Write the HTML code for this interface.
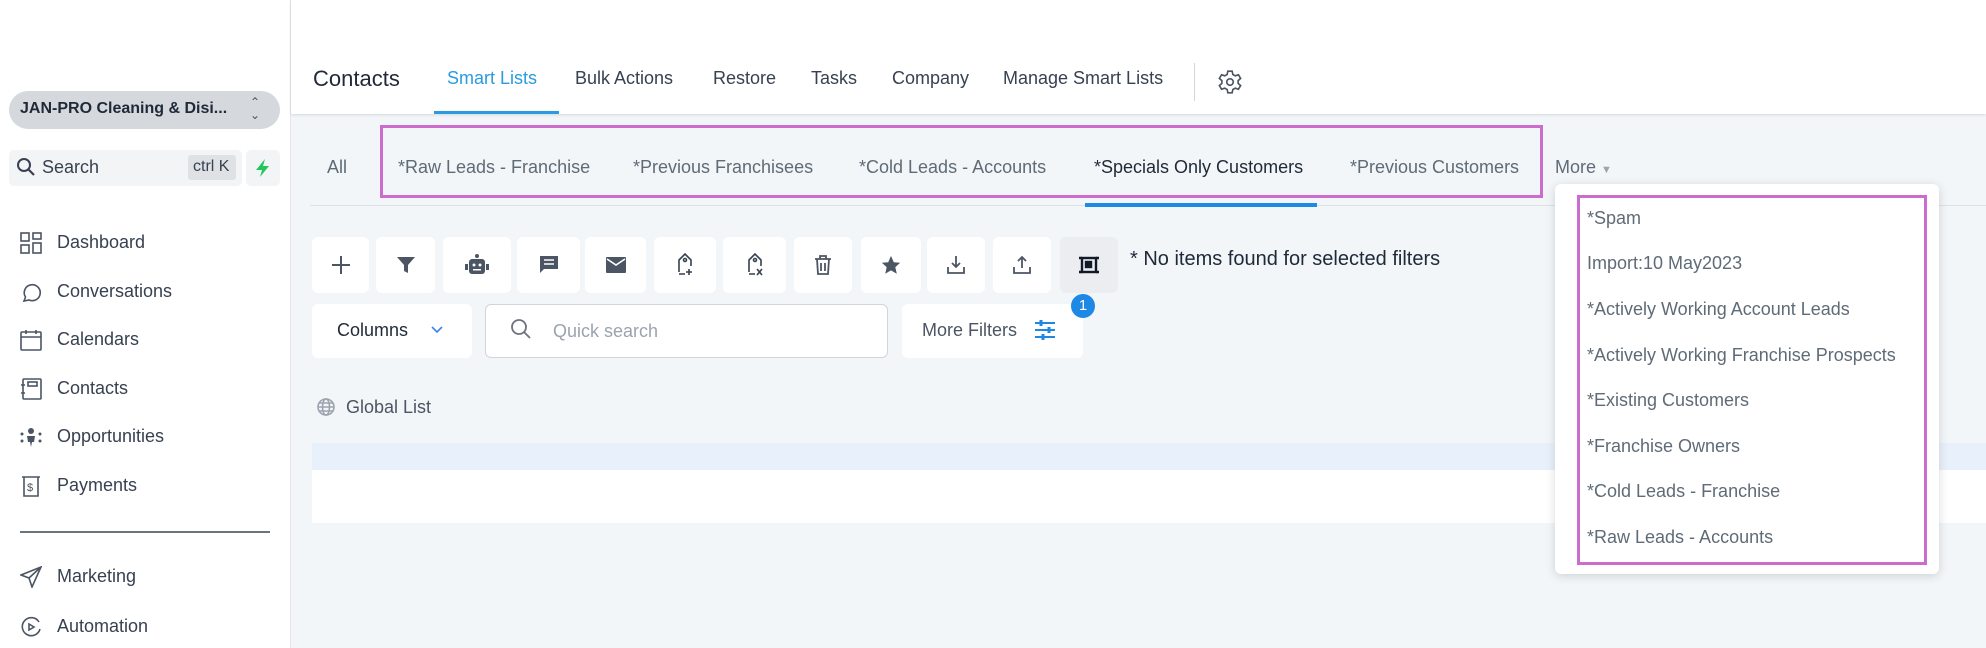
<!DOCTYPE html>
<html><head><meta charset="utf-8"><style>
*{box-sizing:border-box;margin:0;padding:0}
body{width:1986px;height:648px;overflow:hidden;background:#f2f6f9;font-family:"Liberation Sans",sans-serif;position:relative;color:#374151}
.a{position:absolute;white-space:nowrap}
#side{left:0;top:0;width:291px;height:648px;background:#fff;border-right:1px solid #e5e7eb}
#top{left:291px;top:0;width:1695px;height:114px;background:#fff;box-shadow:0 1px 3px rgba(0,0,0,.12)}
.nav{font-size:18px;color:#374151;left:57px}
.ic{left:20px;width:22px;height:22px}
.ht{font-size:18px;color:#374151;top:68px}
.st{font-size:18px;color:#5f6b76;top:157px}
.btn{top:237px;height:56px;background:#fff;border-radius:6px}
.btn svg{position:absolute;left:50%;top:50%;transform:translate(-50%,-50%)}
.dd{font-size:18px;color:#5f6b76;left:1587px}
</style></head><body>
<div id="side" class="a"></div>
<div class="a" style="left:9px;top:91px;width:271px;height:38px;border-radius:19px;background:#d5d8dd"></div>
<div class="a" style="left:20px;top:100px;font-size:16px;font-weight:bold;color:#1f2937">JAN-PRO Cleaning &amp; Disi...</div>
<div class="a" style="left:250px;top:96px;font-size:12px;color:#4b5563;line-height:13px;text-align:center">&#8963;<br>&#8964;</div>
<div class="a" style="left:9px;top:150px;width:233px;height:36px;border-radius:5px;background:#f3f4f6"></div>
<svg class="a" style="left:16px;top:157px" width="20" height="20" viewBox="0 0 20 20"><circle cx="8" cy="8" r="6" fill="none" stroke="#374151" stroke-width="2"/><path d="M12.5 12.5L18 18" stroke="#374151" stroke-width="2.2"/></svg>
<div class="a" style="left:42px;top:157px;font-size:18px;color:#374151">Search</div>
<div class="a" style="left:188px;top:155px;width:48px;height:25px;background:#dfe1e5;border-radius:3px;font-size:16px;color:#374151;padding:3px 5px">ctrl K</div>
<div class="a" style="left:246px;top:150px;width:34px;height:36px;border-radius:5px;background:#f3f4f6"></div>
<svg class="a" style="left:253px;top:158px" width="20" height="20" viewBox="0 0 20 20"><path d="M12 1L3 12h6l-2 7 9-11h-6z" fill="#22c55e"/></svg>

<svg class="a ic" style="top:232px" viewBox="0 0 22 22" fill="none" stroke="#4b5563" stroke-width="1.6"><rect x="1" y="1" width="8" height="8"/><rect x="13" y="1" width="8" height="6"/><rect x="1" y="13" width="8" height="8"/><rect x="13" y="11" width="8" height="10"/></svg>
<div class="a nav" style="top:232px">Dashboard</div>
<svg class="a ic" style="top:281px" viewBox="0 0 22 22" fill="none" stroke="#4b5563" stroke-width="1.6"><path d="M4 20l1.5-4A8 8 0 1 1 9 19z"/></svg>
<div class="a nav" style="top:281px">Conversations</div>
<svg class="a ic" style="top:329px" viewBox="0 0 22 22" fill="none" stroke="#4b5563" stroke-width="1.6"><rect x="1" y="3" width="20" height="18" rx="1"/><path d="M1 8h20M6 1v4M16 1v4"/></svg>
<div class="a nav" style="top:329px">Calendars</div>
<svg class="a ic" style="top:378px" viewBox="0 0 22 22" fill="none" stroke="#4b5563" stroke-width="1.6"><rect x="3" y="1" width="18" height="20" rx="1"/><rect x="8" y="4" width="9" height="4"/><path d="M1 7h4M1 15h4"/></svg>
<div class="a nav" style="top:378px">Contacts</div>
<svg class="a ic" style="top:426px" viewBox="0 0 22 22" fill="#4b5563"><circle cx="11" cy="5" r="3"/><path d="M7 10h8l-1 6h-2l-1 5-1-5H8z"/><circle cx="2" cy="8" r="1.5"/><circle cx="20" cy="8" r="1.5"/><circle cx="2" cy="15" r="1.5"/><circle cx="20" cy="15" r="1.5"/></svg>
<div class="a nav" style="top:426px">Opportunities</div>
<svg class="a ic" style="top:475px" viewBox="0 0 22 22" fill="none" stroke="#4b5563" stroke-width="1.6"><path d="M2 2h18M4 2v19h14V2"/><text x="7" y="16" font-size="11" fill="#4b5563" stroke="none" font-family="Liberation Sans">$</text></svg>
<div class="a nav" style="top:475px">Payments</div>
<div class="a" style="left:20px;top:531px;width:250px;height:2px;background:#6b7280"></div>
<svg class="a ic" style="top:566px" viewBox="0 0 22 22" fill="none" stroke="#4b5563" stroke-width="1.6"><path d="M21 1L1 9l8 3 3 9z M9 12L21 1"/></svg>
<div class="a nav" style="top:566px">Marketing</div>
<svg class="a ic" style="top:616px" viewBox="0 0 22 22" fill="none" stroke="#4b5563" stroke-width="1.6"><path d="M19 6A9 9 0 1 0 20 13"/><path d="M9 8l5 3-5 3z"/></svg>
<div class="a nav" style="top:616px">Automation</div>

<div id="top" class="a"></div>
<div class="a" style="left:313px;top:66px;font-size:22px;color:#1f2937">Contacts</div>
<div class="a ht" style="left:447px;color:#2a9be0">Smart Lists</div>
<div class="a" style="left:434px;top:111px;width:125px;height:3px;background:#2a9be0"></div>
<div class="a ht" style="left:575px">Bulk Actions</div>
<div class="a ht" style="left:713px">Restore</div>
<div class="a ht" style="left:811px">Tasks</div>
<div class="a ht" style="left:892px">Company</div>
<div class="a ht" style="left:1003px">Manage Smart Lists</div>
<div class="a" style="left:1194px;top:63px;width:1px;height:38px;background:#d1d5db"></div>
<svg class="a" style="left:1217px;top:69px" width="26" height="26" viewBox="0 0 24 24" fill="none" stroke="#4b5563" stroke-width="1.5"><circle cx="12" cy="12" r="3"/><path d="M10 2h4l.6 3 2.3 1.3 2.9-1 2 3.4-2.3 2v2.6l2.3 2-2 3.4-2.9-1L14.6 19 14 22h-4l-.6-3-2.3-1.3-2.9 1-2-3.4 2.3-2v-2.6l-2.3-2 2-3.4 2.9 1L9.4 5z"/></svg>

<div class="a st" style="left:327px">All</div>
<div class="a" style="left:380px;top:125px;width:1163px;height:73px;border:3px solid #cc6ccc"></div>
<div class="a st" style="left:398px">*Raw Leads - Franchise</div>
<div class="a st" style="left:633px">*Previous Franchisees</div>
<div class="a st" style="left:859px">*Cold Leads - Accounts</div>
<div class="a st" style="left:1094px;color:#1f2937">*Specials Only Customers</div>
<div class="a st" style="left:1350px">*Previous Customers</div>
<div class="a st" style="left:1555px">More <span style="font-size:11px;color:#9ca3af">&#9660;</span></div>
<div class="a" style="left:310px;top:205px;width:1676px;height:1px;background:#dde2e6"></div>
<div class="a" style="left:1085px;top:203px;width:232px;height:4px;background:#1e88e5"></div>

<div class="a btn" style="left:312px;width:57px"><svg width="22" height="22" viewBox="0 0 22 22" stroke="#4b5563" stroke-width="2"><path d="M11 2v18M2 11h18"/></svg></div>
<div class="a btn" style="left:376px;width:59px"><svg width="20" height="20" viewBox="0 0 20 20" fill="#4b5563"><path d="M1 2h18l-7 8v8l-4-2v-6z"/></svg></div>
<div class="a btn" style="left:443px;width:68px"><svg width="28" height="24" viewBox="0 0 28 24" fill="#4b5563"><circle cx="14" cy="3" r="2"/><rect x="6" y="6" width="16" height="15" rx="3"/><rect x="2" y="11" width="3" height="6"/><rect x="23" y="11" width="3" height="6"/><circle cx="11" cy="12" r="1.5" fill="#fff"/><circle cx="17" cy="12" r="1.5" fill="#fff"/><rect x="10" y="16" width="8" height="1.5" fill="#fff"/></svg></div>
<div class="a btn" style="left:517px;width:63px"><svg width="20" height="20" viewBox="0 0 20 20" fill="#4b5563"><path d="M1 1h18v13H5l-4 4z"/><path d="M5 5h10M5 9h10" stroke="#fff" stroke-width="1.5"/></svg></div>
<div class="a btn" style="left:585px;width:61px"><svg width="20" height="16" viewBox="0 0 20 16" fill="#4b5563"><rect x="0" y="0" width="20" height="16" rx="1"/><path d="M1 2l9 6 9-6" stroke="#fff" stroke-width="1.6" fill="none"/></svg></div>
<div class="a btn" style="left:654px;width:62px"><svg width="20" height="26" viewBox="0 0 20 26" fill="none" stroke="#374151" stroke-width="1.6"><path d="M4 20V8l6-6 6 6v6"/><circle cx="10" cy="8" r="1.5"/><path d="M4 22h6M14 17v6M11 20h6"/></svg></div>
<div class="a btn" style="left:723px;width:63px"><svg width="20" height="26" viewBox="0 0 20 26" fill="none" stroke="#374151" stroke-width="1.6"><path d="M4 20V8l6-6 6 6v6"/><circle cx="10" cy="8" r="1.5"/><path d="M4 22h6M12 17l5 6M17 17l-5 6"/></svg></div>
<div class="a btn" style="left:794px;width:58px"><svg width="18" height="20" viewBox="0 0 18 20" fill="none" stroke="#4b5563" stroke-width="1.8"><path d="M1 4h16M6 4V1h6v3M3 4l1 15h10l1-15M7 8v8M11 8v8"/></svg></div>
<div class="a btn" style="left:861px;width:60px"><svg width="22" height="22" viewBox="0 0 24 24" fill="#4b5563"><path d="M12 2l3 7 7 .6-5.3 4.7 1.6 7.2L12 17.8 5.7 21.5l1.6-7.2L2 9.6 9 9z"/></svg></div>
<div class="a btn" style="left:927px;width:58px"><svg width="20" height="20" viewBox="0 0 20 20" fill="none" stroke="#4b5563" stroke-width="1.8"><path d="M10 1v11M6 8l4 4 4-4M2 12v6h16v-6"/></svg></div>
<div class="a btn" style="left:993px;width:58px"><svg width="20" height="20" viewBox="0 0 20 20" fill="none" stroke="#4b5563" stroke-width="1.8"><path d="M10 13V2M6 6l4-4 4 4M2 12v6h16v-6"/></svg></div>
<div class="a btn" style="left:1060px;width:58px;background:#ebedf0"><svg width="20" height="18" viewBox="0 0 20 18" fill="none" stroke="#111827" stroke-width="2.4"><rect x="3" y="2" width="14" height="14"/><path d="M0 2h3M0 16h3M17 2h3M17 16h3"/><rect x="7" y="6" width="5" height="5" fill="#111827"/></svg></div>
<div class="a" style="left:1130px;top:248px;font-size:20px;color:#1f2937">* No items found for selected filters</div>

<div class="a" style="left:312px;top:304px;width:160px;height:54px;background:#fff;border-radius:6px"></div>
<div class="a" style="left:337px;top:320px;font-size:18px;color:#1f2937">Columns</div>
<svg class="a" style="left:430px;top:325px" width="14" height="10" viewBox="0 0 14 10" fill="none" stroke="#3b82f6" stroke-width="1.6"><path d="M2 2l5 5 5-5"/></svg>
<div class="a" style="left:485px;top:304px;width:403px;height:54px;background:#fff;border:1.5px solid #d1d5db;border-radius:6px"></div>
<svg class="a" style="left:510px;top:318px" width="22" height="22" viewBox="0 0 22 22" fill="none" stroke="#6b7280" stroke-width="1.8"><circle cx="9" cy="9" r="7"/><path d="M14 14l6 6"/></svg>
<div class="a" style="left:553px;top:321px;font-size:18px;color:#9ca3af">Quick search</div>
<div class="a" style="left:902px;top:304px;width:181px;height:54px;background:#fff;border-radius:6px"></div>
<div class="a" style="left:922px;top:320px;font-size:18px;color:#4b5563">More Filters</div>
<svg class="a" style="left:1034px;top:319px" width="22" height="22" viewBox="0 0 22 22" stroke="#1e88e5" stroke-width="2"><path d="M1 4h20M1 11h20M1 18h20"/><path d="M7 1v6M15 8v6M9 15v6" stroke-width="3"/></svg>
<div class="a" style="left:1071px;top:294px;width:24px;height:24px;border-radius:12px;background:#1e88e5;color:#fff;font-size:15px;text-align:center;line-height:24px">1</div>

<svg class="a" style="left:317px;top:398px" width="18" height="18" viewBox="0 0 18 18" fill="none" stroke="#9ca3af" stroke-width="1.6"><circle cx="9" cy="9" r="8"/><ellipse cx="9" cy="9" rx="3.5" ry="8"/><path d="M1 9h16M2 5h14M2 13h14"/></svg>
<div class="a" style="left:346px;top:397px;font-size:18px;color:#4b5563">Global List</div>
<div class="a" style="left:312px;top:443px;width:1674px;height:27px;background:#e8f1fb"></div>
<div class="a" style="left:312px;top:470px;width:1674px;height:53px;background:#fff"></div>

<div class="a" style="left:1555px;top:184px;width:384px;height:390px;background:#fff;border-radius:6px;box-shadow:0 2px 10px rgba(0,0,0,.15)"></div>
<div class="a" style="left:1577px;top:195px;width:350px;height:370px;border:3px solid #cc6ccc"></div>
<div class="a dd" style="top:208px">*Spam</div>
<div class="a dd" style="top:253px">Import:10 May2023</div>
<div class="a dd" style="top:299px">*Actively Working Account Leads</div>
<div class="a dd" style="top:345px">*Actively Working Franchise Prospects</div>
<div class="a dd" style="top:390px">*Existing Customers</div>
<div class="a dd" style="top:436px">*Franchise Owners</div>
<div class="a dd" style="top:481px">*Cold Leads - Franchise</div>
<div class="a dd" style="top:527px">*Raw Leads - Accounts</div>
</body></html>
